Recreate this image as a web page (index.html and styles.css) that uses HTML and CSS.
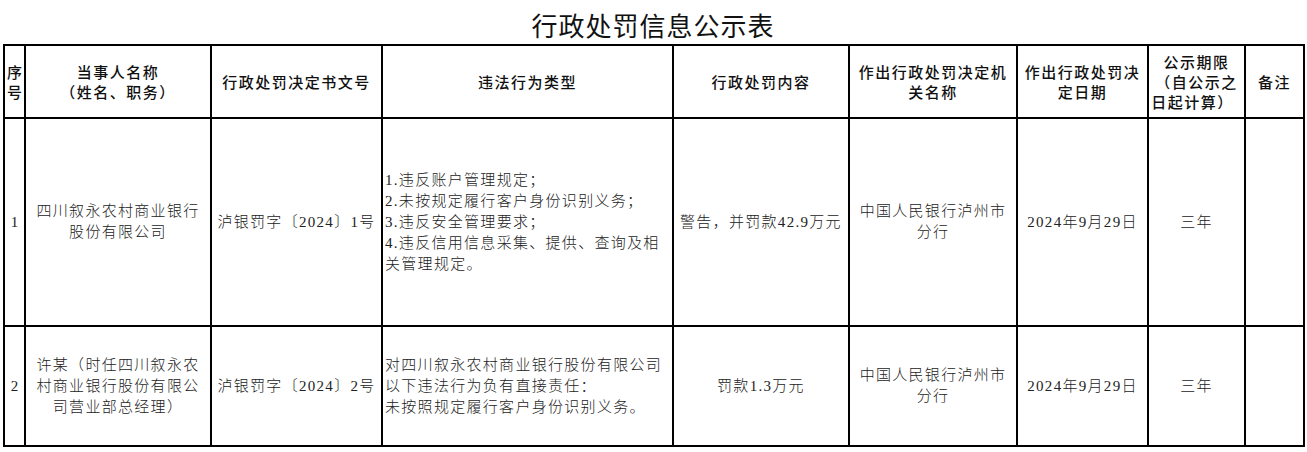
FILE: index.html
```html
<!DOCTYPE html>
<html lang="zh">
<head>
<meta charset="utf-8">
<link rel="stylesheet" href="styles.css">
</head>
<body>
<h1 class="title">行政处罚信息公示表</h1>
<table class="grid">
  <colgroup>
    <col class="c1"><col class="c2"><col class="c3"><col class="c4"><col class="c5"><col class="c6"><col class="c7"><col class="c8"><col class="c9">
  </colgroup>
  <thead>
    <tr class="head">
      <th class="seq">序<br>号</th>
      <th>当事人名称<br>（姓名、职务）</th>
      <th>行政处罚决定书文号</th>
      <th>违法行为类型</th>
      <th>行政处罚内容</th>
      <th>作出行政处罚决定机<br>关名称</th>
      <th>作出行政处罚决<br>定日期</th>
      <th>公示期限<br>（自公示之<br><span class="lft">日起计算）</span></th>
      <th>备注</th>
    </tr>
  </thead>
  <tbody>
    <tr class="r1">
      <td class="seq">1</td>
      <td>四川叙永农村商业银行<br>股份有限公司</td>
      <td>泸银罚字〔2024〕1号</td>
      <td class="left">1.违反账户管理规定；<br>2.未按规定履行客户身份识别义务；<br>3.违反安全管理要求；<br>4.违反信用信息采集、提供、查询及相<br>关管理规定。</td>
      <td>警告，并罚款42.9万元</td>
      <td>中国人民银行泸州市<br>分行</td>
      <td>2024年9月29日</td>
      <td>三年</td>
      <td></td>
    </tr>
    <tr class="r2">
      <td class="seq">2</td>
      <td>许某（时任四川叙永农<br>村商业银行股份有限公<br>司营业部总经理）</td>
      <td>泸银罚字〔2024〕2号</td>
      <td class="left">对四川叙永农村商业银行股份有限公司<br>以下违法行为负有直接责任：<br>未按照规定履行客户身份识别义务。</td>
      <td>罚款1.3万元</td>
      <td>中国人民银行泸州市<br>分行</td>
      <td>2024年9月29日</td>
      <td>三年</td>
      <td></td>
    </tr>
  </tbody>
</table>
</body>
</html>
```

FILE: styles.css
```css
html, body {
  margin: 0;
  padding: 0;
  background: #fff;
  color: #111;
}
body {
  padding: 0 4px 0 3px;
  font-family: "Liberation Serif", "Noto Sans CJK SC", serif;
}
.title {
  margin: 0;
  padding-top: 8px;
  height: 36px;
  text-align: center;
  font-family: "Noto Sans CJK SC", sans-serif;
  font-size: 26px;
  font-weight: 400;
  letter-spacing: 1px;
  line-height: 34px;
  color: #111;
}
.grid {
  border-collapse: collapse;
  table-layout: fixed;
  width: 1300px;
}
.grid th, .grid td {
  border: 2px solid #000;
  padding: 0 2px;
  text-align: center;
  vertical-align: middle;
  overflow: visible;
  white-space: nowrap;
}
.grid th {
  font-family: "Noto Sans CJK SC", sans-serif;
  font-weight: 500;
  font-size: 15px;
  line-height: 20px;
  letter-spacing: 1.5px;
}
.grid td {
  font-size: 15px;
  line-height: 21px;
  letter-spacing: 1.3px;
  font-weight: 300;
  color: #222;
}
.grid .seq { padding: 0; letter-spacing: 0; }
.grid td.left { text-align: left; padding-left: 2px; }
.lft { display: inline-block; margin-left: -8px; }
.c1 { width: 21px; }
.c2 { width: 186px; }
.c3 { width: 171px; }
.c4 { width: 291px; }
.c5 { width: 176px; }
.c6 { width: 168px; }
.c7 { width: 131px; }
.c8 { width: 97px; }
.c9 { width: 59px; }
.head { height: 73px; }
.r1 { height: 208px; }
.r2 { height: 120px; }
```
